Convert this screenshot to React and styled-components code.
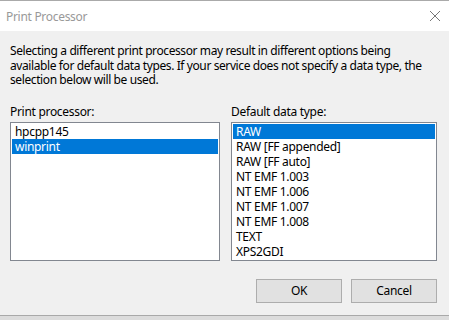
import React, { useState } from "react";
import styled, { createGlobalStyle } from "styled-components";

const GlobalStyle = createGlobalStyle`
  html, body {
    margin: 0;
    padding: 0;
    background: #f0f0f0;
  }
  body {
    font-family: "Noto Sans", "Open Sans", sans-serif;
    font-size: 12px;
    letter-spacing: -0.3px;
    color: #000;
  }
`;

const Window = styled.div`
  width: 449px;
  height: 320px;
  display: flex;
  flex-direction: column;
  background: #f0f0f0;
  border-top: 1px solid #aaaaaa;
  box-sizing: border-box;
  overflow: hidden;
`;

const TitleBar = styled.div`
  height: 30px;
  flex: none;
  display: flex;
  align-items: center;
  justify-content: space-between;
  background: #fff;
  padding: 0 8px 0 6px;
`;

const Title = styled.span`
  color: #999999;
  font-size: 12px;
`;

const Close = styled.svg`
  width: 12px;
  height: 12px;
`;

const Body = styled.div`
  flex: 1;
  display: flex;
  flex-direction: column;
  padding: 13px 12px 0 10px;
`;

const Description = styled.p`
  margin: 0;
  line-height: 14.5px;
  letter-spacing: -0.4px;
  white-space: nowrap;
`;

const Columns = styled.div`
  display: grid;
  grid-template-columns: 210px 206px;
  column-gap: 11px;
  margin-top: 16px;
`;

const Field = styled.div`
  display: flex;
  flex-direction: column;
`;

const Label = styled.label`
  line-height: 15px;
  margin-bottom: 3px;
`;

const ListBox = styled.ul`
  list-style: none;
  margin: 0;
  height: 139px;
  box-sizing: border-box;
  border: 1px solid #828790;
  background: #fff;
  padding: 1px;
`;

const Item = styled.li`
  height: 15px;
  line-height: 15px;
  padding-left: 3px;
  white-space: nowrap;
  background: ${(props) => (props.selected ? "#0078d7" : "transparent")};
  color: ${(props) => (props.selected ? "#fff" : "#000")};
  cursor: default;
`;

const Footer = styled.div`
  display: flex;
  justify-content: flex-end;
  gap: 9px;
  margin-top: 18px;
`;

const Button = styled.button`
  width: 86px;
  height: 24px;
  background: #e1e1e1;
  border: 1px solid #adadad;
  font-family: inherit;
  font-size: 12px;
  letter-spacing: inherit;
  color: #000;
  padding: 0;
`;

const BottomEdge = styled.div`
  height: 4px;
  flex: none;
  border-top: 1px solid #a9a9a9;
  background: #dcdcdc;
`;

const processors = ["hpcpp145", "winprint"];
const dataTypes = [
  "RAW",
  "RAW [FF appended]",
  "RAW [FF auto]",
  "NT EMF 1.003",
  "NT EMF 1.006",
  "NT EMF 1.007",
  "NT EMF 1.008",
  "TEXT",
  "XPS2GDI",
];

export default function App() {
  const [processor, setProcessor] = useState("winprint");
  const [dataType, setDataType] = useState("RAW");

  return (
    <>
      <GlobalStyle />
      <Window>
        <TitleBar>
          <Title>Print Processor</Title>
          <Close viewBox="0 0 12 12">
            <path d="M1 1L11 11M11 1L1 11" stroke="#777" strokeWidth="1" fill="none" />
          </Close>
        </TitleBar>
        <Body>
          <Description>
            Selecting a different print processor may result in different options being
            <br />
            available for default data types. If your service does not specify a data type, the
            <br />
            selection below will be used.
          </Description>
          <Columns>
            <Field>
              <Label>Print processor:</Label>
              <ListBox>
                {processors.map((p) => (
                  <Item key={p} selected={p === processor} onClick={() => setProcessor(p)}>
                    {p}
                  </Item>
                ))}
              </ListBox>
            </Field>
            <Field>
              <Label>Default data type:</Label>
              <ListBox>
                {dataTypes.map((d) => (
                  <Item key={d} selected={d === dataType} onClick={() => setDataType(d)}>
                    {d}
                  </Item>
                ))}
              </ListBox>
            </Field>
          </Columns>
          <Footer>
            <Button>OK</Button>
            <Button>Cancel</Button>
          </Footer>
        </Body>
        <BottomEdge />
      </Window>
    </>
  );
}
